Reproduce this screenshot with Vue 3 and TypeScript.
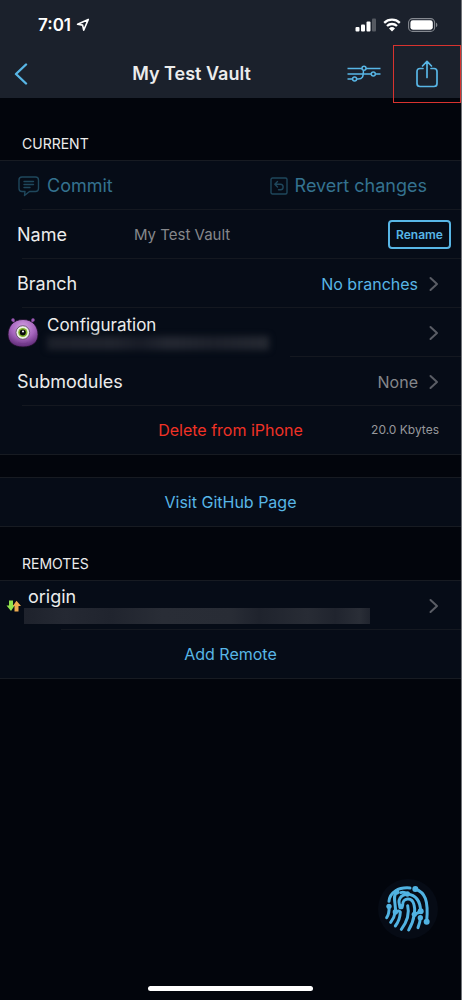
<script setup lang="ts">
import { ref } from 'vue'

const vaultName = ref('My Test Vault')
</script>

<template>
  <div class="screen">
    <header class="top">
      <div class="status">
        <span class="clock">7:01</span>
        <svg class="location" width="14" height="14" viewBox="0 0 14 14" aria-hidden="true">
          <path d="M12.3 1.4 1.6 6.3 6.6 7.1 7.7 12.2Z" fill="none" stroke="#fff" stroke-width="1.6" stroke-linejoin="round" />
        </svg>
        <svg class="signal" width="22" height="14" viewBox="0 0 22 14" aria-hidden="true">
          <rect x="0.5" y="9" width="4" height="4.5" rx="1" fill="#fff" />
          <rect x="6" y="6.5" width="4" height="7" rx="1" fill="#fff" />
          <rect x="11.5" y="3.5" width="4" height="10" rx="1" fill="#fff" />
          <rect x="17" y="0.5" width="4" height="13" rx="1" fill="#555961" />
        </svg>
        <svg class="wifi" width="18" height="14" viewBox="0 0 18 14" aria-hidden="true">
          <path d="M1.2 4.8a11.2 11.2 0 0 1 15.6 0M4 8a7.2 7.2 0 0 1 10 0" fill="none" stroke="#fff" stroke-width="2.3" />
          <path d="M6 10.4a4.4 4.4 0 0 1 6 0L9 13.6Z" fill="#fff" />
        </svg>
        <svg class="battery" width="30" height="14" viewBox="0 0 30 14" aria-hidden="true">
          <rect x="0.6" y="0.6" width="26" height="12.8" rx="4" fill="none" stroke="#858990" stroke-width="1.1" />
          <rect x="2.4" y="2.3" width="22.4" height="9.4" rx="2.4" fill="#fff" />
          <path d="M28 4.8c1.8.5 1.8 3.9 0 4.4Z" fill="#858990" />
        </svg>
      </div>
      <nav class="bar">
        <button class="back" aria-label="Back">
          <svg width="14" height="22" viewBox="0 0 14 22"><path d="M12 1.5 2 11l10 9.5" fill="none" stroke="#58b6e6" stroke-width="2.4" stroke-linecap="round" stroke-linejoin="round" /></svg>
        </button>
        <h1>My Test Vault</h1>
        <div class="tools">
          <button aria-label="History">
            <svg width="34" height="18" viewBox="0 0 34 18" fill="none" stroke="#58b6e6" stroke-width="1.5">
              <path d="M0.5 3.5H15M19 3.5H33.5M0.5 9H24M28.5 9H33.5M0.5 14H5.5M9.8 14H11C17 14 16 9.5 16.500 5.5" />
              <circle cx="17" cy="3.2" r="2" /><circle cx="26.3" cy="9" r="2" /><circle cx="7.6" cy="14" r="2" />
            </svg>
          </button>
          <button class="share" aria-label="Share">
            <svg width="22" height="28" viewBox="0 0 22 28" fill="none" stroke="#58b6e6" stroke-width="1.7" stroke-linecap="round" stroke-linejoin="round">
              <path d="M7 8.5H4Q1 8.5 1 11.5V23.5Q1 26.5 4 26.5H18Q21 26.5 21 23.5V11.5Q21 8.5 18 8.5H15M11 17.5V1.5M6.5 6 11 1.3 15.5 6" />
            </svg>
          </button>
        </div>
      </nav>
    </header>

    <main>
      <h2>CURRENT</h2>
      <section class="group">
        <div class="row actions">
          <button class="dim" disabled>
            <svg width="22" height="22" viewBox="0 0 22 22" fill="none" stroke="#1f475c" stroke-width="1.4" stroke-linejoin="round" stroke-linecap="round">
              <path d="M4 2H17.5Q20.5 2 20.5 5V13.5Q20.5 16.5 17.5 16.5H11.5L6.5 20.5 7 16.5H4Q1 16.5 1 13.5V5Q1 2 4 2ZM6 6.5H15.5M6 9.5H15.5M6 12.5H12" />
            </svg>
            Commit
          </button>
          <button class="dim" disabled>
            <svg width="18" height="18" viewBox="0 0 18 18" fill="none" stroke="#1f475c" stroke-width="1.4" stroke-linejoin="round" stroke-linecap="round">
              <rect x="1" y="1" width="16" height="16" rx="1.5" />
              <path d="M7.5 4.5 4.8 7.2 7.5 9.9M5 7.2H10.5C14 7.2 14 12.8 10.5 12.8H8.5" />
            </svg>
            Revert changes
          </button>
        </div>
        <div class="row">
          <label class="name" for="vault-name">Name</label>
          <input id="vault-name" v-model="vaultName" type="text" />
          <button class="rename">Rename</button>
        </div>
        <button class="row">
          <span class="label">Branch</span>
          <span class="value blue">No branches</span>
          <svg class="chevron" width="10" height="16" viewBox="0 0 10 16"><path d="M1.5 2 8 8l-6.5 6" /></svg>
        </button>
        <button class="row config">
          <svg class="alien" width="32" height="32" viewBox="0 0 32 32" aria-hidden="true">
            <defs>
              <radialGradient id="skin" cx="50%" cy="28%" r="72%">
                <stop offset="0" stop-color="#d3a0e2" /><stop offset="0.55" stop-color="#a565bd" /><stop offset="1" stop-color="#5e2a76" />
              </radialGradient>
            </defs>
            <path d="M6 3 9 7M26 3 23 7" stroke="#8e4aa8" stroke-width="1.5" />
            <circle cx="6" cy="3" r="1.7" fill="#9c58b5" /><circle cx="26" cy="3" r="1.7" fill="#9c58b5" />
            <path d="M16 2.500C26 2.500 31 10 31 17.5S26 30 16 30 1 25 1 17.5 6 2.500 16 2.500Z" fill="url(#skin)" stroke="#1b0c24" stroke-width="0.8" />
            <circle cx="15.8" cy="15.5" r="6.8" fill="#eef0e6" stroke="#54425c" stroke-width="0.8" />
            <circle cx="15.8" cy="15.5" r="4.6" fill="#82b52c" />
            <circle cx="15.8" cy="15.5" r="3" fill="#090b0c" />
            <circle cx="16" cy="14.5" r="1" fill="#fff" />
            <path d="M11 26Q16 28 21 26" fill="none" stroke="#753a8d" stroke-width="1" />
          </svg>
          <span class="stack">
            <span>Configuration</span>
            <span class="redacted soft"></span>
          </span>
          <svg class="chevron" width="10" height="16" viewBox="0 0 10 16"><path d="M1.5 2 8 8l-6.5 6" /></svg>
        </button>
        <button class="row">
          <span class="label">Submodules</span>
          <span class="value">None</span>
          <svg class="chevron" width="10" height="16" viewBox="0 0 10 16"><path d="M1.5 2 8 8l-6.5 6" /></svg>
        </button>
        <div class="row last delete-row">
          <button class="delete">Delete from iPhone</button>
          <span class="size">20.0 Kbytes</span>
        </div>
      </section>

      <section class="group visit">
        <a class="row last center" href="#github">Visit GitHub Page</a>
      </section>

      <h2 class="remotes">REMOTES</h2>
      <section class="group">
        <button class="row origin">
          <svg class="arrows" width="16" height="12" viewBox="0 0 16 12" aria-hidden="true">
            <path d="M3 0.5H7V5H9L5 11 0.5 5.5H3Z" fill="#91e34c" />
            <path d="M8.5 11.5H12.5V6H15L10.5 0.8 6.8 6H8.5Z" fill="#efab50" />
          </svg>
          <span class="stack">
            <span>origin</span>
            <span class="redacted"></span>
          </span>
          <svg class="chevron" width="10" height="16" viewBox="0 0 10 16"><path d="M1.5 2 8 8l-6.5 6" /></svg>
        </button>
        <button class="row last center">Add Remote</button>
      </section>
    </main>

    <button class="touch" aria-label="Fingerprint">
      <svg width="60" height="60" viewBox="24 28 180 180" fill="none" stroke="#51b3e2" stroke-width="9" stroke-linecap="round" stroke-linejoin="round">
        <path d="M136 58C165 68 176 92 170 156" />
        <path d="M120 55C85 52 59 68 57 95" />
        <path d="M57 110C58 126 55 137 50 144" />
        <path d="M80 67C66 80 79 106 76 127Q73 144 62 158" />
        <path d="M92 69Q102 66 112 73C138 76 151 93 152 125" />
        <path d="M112 73C91 76 81 91 91 111M76 127Q87 121 91 127 90 151 76 169" />
        <path d="M98 107C97 84 126 80 132 105Q136 119 133 134 129 160 116 181" />
        <path d="M113 108C119 132 109 159 94 179" />
        <path d="M133 134Q145 130 152 125M151 142Q151 157 144 174" />
        <g fill="#51b3e2" stroke="none">
          <circle cx="136" cy="58" r="9" /><circle cx="170" cy="156" r="9" />
          <circle cx="57" cy="110" r="8" /><circle cx="80" cy="67" r="8" />
          <circle cx="76" cy="127" r="8" /><circle cx="112" cy="73" r="8" />
          <circle cx="93" cy="111" r="8" /><circle cx="152" cy="125" r="9" />
          <circle cx="133" cy="134" r="8" /><circle cx="151" cy="144" r="8" />
        </g>
      </svg>
    </button>
    <div class="home"></div>
  </div>
</template>

<style>
body {
  margin: 0;
  background: #02050c;
}
</style>

<style scoped>
.screen {
  box-sizing: border-box;
  position: relative;
  min-height: 100vh;
  display: flex;
  flex-direction: column;
  background: #02050c;
  border-right: 1px solid #707378;
  color: #ececec;
  font-family: Inter, "Liberation Sans", sans-serif;
  font-size: 18px;
  line-height: 22px;
}
button,
input {
  margin: 0;
  padding: 0;
  border: 0;
  border-radius: 0;
  background: none;
  color: inherit;
  font: inherit;
}
svg {
  display: block;
  flex: none;
}
.top {
  background: #1b212c;
}
.status {
  display: flex;
  align-items: center;
  height: 50px;
  padding: 0 23px 0 38px;
}
.clock {
  color: #fff;
  font-size: 17px;
  font-weight: 600;
}
.location {
  margin-left: 5px;
}
.signal {
  margin-left: auto;
}
.wifi {
  margin: 0 7px 0 6px;
}
.bar {
  display: grid;
  grid-template-columns: 48px 1fr 126px;
  align-items: center;
  height: 48px;
}
.bar h1 {
  margin: 0;
  font-size: 18px;
  font-weight: 600;
  text-align: center;
}
.back {
  padding-left: 14px;
  justify-self: start;
}
.tools {
  display: flex;
  align-items: center;
  justify-content: space-between;
  height: 44px;
  padding-left: 12px;
}
.share {
  box-sizing: border-box;
  width: 68px;
  height: 58px;
  border: 1px solid #d8332f;
  display: grid;
  place-items: center;
}
h2 {
  margin: 0;
  padding: 35px 22px 5px;
  font-size: 14px;
  font-weight: 400;
  line-height: 22px;
}
.group {
  background: #060c17;
  border-top: 1px solid #171b22;
  border-bottom: 1px solid #171b22;
}
.row {
  position: relative;
  box-sizing: border-box;
  width: 100%;
  height: 49px;
  display: flex;
  align-items: center;
  padding: 0 22px 0 17px;
  text-align: left;
  text-decoration: none;
}
.row::after {
  content: "";
  position: absolute;
  left: 22px;
  right: 0;
  bottom: 0;
  height: 1px;
  background: #141820;
}
.row.last {
  height: 48px;
}
.row.last::after {
  display: none;
}
.actions {
  justify-content: space-between;
  padding: 0 34px 0 18px;
}
.dim {
  display: flex;
  align-items: center;
  gap: 7px;
  color: #34728f;
}
.name {
  width: 117px;
}
input {
  flex: 1;
  min-width: 0;
  color: #85878b;
  font-size: 15px;
  outline: none;
}
.rename {
  box-sizing: border-box;
  width: 63px;
  height: 29px;
  margin-right: -12px;
  border: 2px solid #58b6e6;
  border-radius: 4px;
  color: #58b6e6;
  font-size: 12px;
  font-weight: 600;
  line-height: 16px;
}
.value {
  margin-left: auto;
  color: #85878b;
  font-size: 16px;
}
.value.blue {
  color: #58b6e6;
}
.chevron {
  margin-left: 11px;
}
.chevron path {
  fill: none;
  stroke: #5a5d65;
  stroke-width: 2;
  stroke-linecap: round;
  stroke-linejoin: round;
}
.config {
  padding-left: 7px;
}
.config::after {
  left: 290px;
}
.stack {
  flex: 1;
  min-width: 0;
  display: flex;
  flex-direction: column;
  gap: 2px;
}
.stack > span:first-child {
  line-height: 18px;
  font-size: 17px;
}
.config .stack {
  padding-left: 8px;
}
.redacted {
  display: block;
  width: 346px;
  max-width: 100%;
  height: 16px;
  margin-left: -4px;
  background: linear-gradient(90deg, #1e222c, #252933 12%, #20242e 25%, #292d36 40%, #282c35 60%, #1f232d 68%, #282c35 82%, #20242e 90%, #2a2e37 97%, #20242e);
}
.redacted.soft {
  width: 222px;
  height: 14px;
  margin-left: 0;
  filter: blur(3px);
  background: linear-gradient(90deg, #1c202a, #20242e 30%, #181c27 42%, #242832 55%, #1d212b 75%, #252932);
}
.delete-row {
  display: grid;
  grid-template-columns: 1fr auto 1fr;
  padding: 0 22px;
}
.delete {
  grid-column: 2;
  color: #f03226;
  font-size: 16px;
}
.size {
  justify-self: end;
  color: #96989c;
  font-size: 12px;
}
.visit {
  margin-top: 22px;
}
.remotes {
  padding-top: 26px;
}
.row.center {
  justify-content: center;
  padding: 0 17px;
  color: #58b6e6;
  text-align: center;
  font-size: 16px;
}
.origin {
  padding-left: 6px;
}
.origin::after {
  left: 61px;
}
.origin .stack {
  padding-left: 6px;
}
.origin .stack > span:first-child {
  font-size: 18px;
}
.touch {
  position: absolute;
  right: 23px;
  bottom: 61px;
  border-radius: 50%;
  background: #060b15;
}
.home {
  width: 165px;
  height: 5px;
  margin: auto auto 9px;
  border-radius: 3px;
  background: #fff;
}
</style>
